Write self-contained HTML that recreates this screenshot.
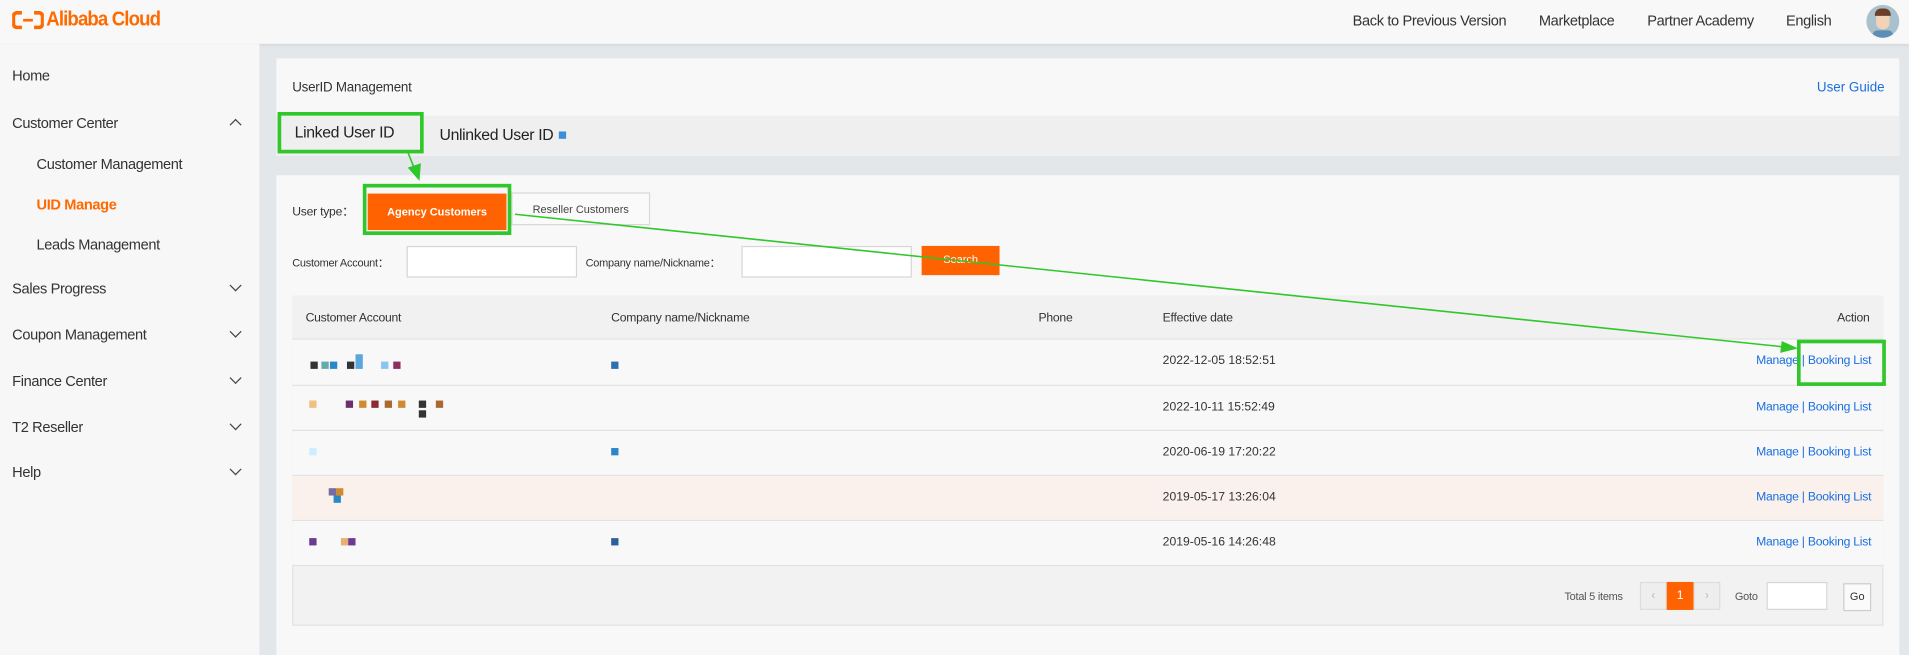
<!DOCTYPE html>
<html><head><meta charset="utf-8"><style>
*{margin:0;padding:0;box-sizing:border-box}
body{width:1909px;height:655px;overflow:hidden;background:#e4e7ea;font-family:"Liberation Sans",Arial,sans-serif}
#w{position:absolute;left:0;top:0;width:1568px;height:538px;transform:scale(1.21747);transform-origin:0 0;background:#e4e7ea}
.a{position:absolute;white-space:nowrap}
.hdr{position:absolute;left:0;top:0;width:1568px;height:36px;background:#f8f8f8;box-shadow:0 1px 3px rgba(0,0,0,.08)}
.side{position:absolute;left:0;top:36px;width:213px;height:502px;background:#f7f7f7}
.side .a{font-size:12px;color:#333;letter-spacing:-.3px}
.chev{position:absolute;width:7px;height:7px;border-right:1.3px solid #444;border-bottom:1.3px solid #444}
.panel{position:absolute;left:227px;width:1333px;background:#f8f8f8}
.t{font-size:10px;color:#333;letter-spacing:-.2px}
.inp{position:absolute;background:#fff;border:1px solid #d6d6d6}
.row{position:absolute;left:240px;width:1307px;height:37px;border-bottom:1px solid #e2e2e2;background:#f8f8f8}
.row .d{position:absolute;left:715px;top:12px;font-size:10px;color:#333}
.row .m{position:absolute;right:10px;top:12px;font-size:10px;color:#1b6fe0;letter-spacing:-.2px}
.px{position:absolute;width:6px;height:6px}
.g{position:absolute;border:3px solid #2fc72a}
</style></head><body><div id="w">
<div class="hdr">
 <svg class="a" style="left:10px;top:9px" width="26" height="15" viewBox="0 0 26 15"><path d="M8 1.5H4a3 3 0 0 0-3 3v6a3 3 0 0 0 3 3h4M18 1.5h4a3 3 0 0 1 3 3v6a3 3 0 0 1-3 3h-4" fill="none" stroke="#ff6a00" stroke-width="3"/><rect x="9" y="6.5" width="8" height="2.2" fill="#ff6a00"/></svg>
 <div class="a" style="left:38px;top:6px;font-size:17px;color:#ff6a00;letter-spacing:-.8px;font-weight:bold;transform:scaleX(.9);transform-origin:0 0">Alibaba Cloud</div>
 <div class="a" style="left:1111px;top:10px;font-size:12px;color:#333;letter-spacing:-.3px">Back to Previous Version</div>
 <div class="a" style="left:1264px;top:10px;font-size:12px;color:#333;letter-spacing:-.3px">Marketplace</div>
 <div class="a" style="left:1353px;top:10px;font-size:12px;color:#333;letter-spacing:-.3px">Partner Academy</div>
 <div class="a" style="left:1467px;top:10px;font-size:12px;color:#333;letter-spacing:-.3px">English</div>
 <div class="a" style="left:1533px;top:4px;width:27px;height:27px;border-radius:50%;background:#a9c1cc;overflow:hidden"><div class="a" style="left:8px;top:6px;width:11px;height:14px;border-radius:5px;background:#f3d3b8"></div><div class="a" style="left:7px;top:3px;width:13px;height:6px;border-radius:5px 5px 0 0;background:#6b3f2a"></div><div class="a" style="left:5px;top:21px;width:17px;height:8px;border-radius:6px;background:#5b8fb3"></div></div>
</div>
<div class="side">
 <div class="a" style="left:10px;top:19px">Home</div>
 <div class="a" style="left:10px;top:58px">Customer Center</div>
 <div class="chev" style="left:190px;top:63px;transform:rotate(-135deg)"></div>
 <div class="a" style="left:30px;top:92px">Customer Management</div>
 <div class="a" style="left:30px;top:125px;color:#ff6a00;font-weight:bold">UID Manage</div>
 <div class="a" style="left:30px;top:158px">Leads Management</div>
 <div class="a" style="left:10px;top:194px">Sales Progress</div><div class="chev" style="left:190px;top:195px;transform:rotate(45deg)"></div>
 <div class="a" style="left:10px;top:232px">Coupon Management</div><div class="chev" style="left:190px;top:233px;transform:rotate(45deg)"></div>
 <div class="a" style="left:10px;top:270px">Finance Center</div><div class="chev" style="left:190px;top:271px;transform:rotate(45deg)"></div>
 <div class="a" style="left:10px;top:308px">T2 Reseller</div><div class="chev" style="left:190px;top:309px;transform:rotate(45deg)"></div>
 <div class="a" style="left:10px;top:345px">Help</div><div class="chev" style="left:190px;top:346px;transform:rotate(45deg)"></div>
</div>
<div class="panel" style="top:48px;height:80px">
 <div class="a t" style="left:13px;top:18px;font-size:11px">UserID Management</div>
 <div class="a" style="right:12px;top:18px;font-size:11px;color:#1b6fe0">User Guide</div>
 <div class="a" style="left:0;top:47px;width:1333px;height:33px;background:#efefef"></div>
 <div class="a" style="left:15px;top:53px;font-size:13px;color:#222;letter-spacing:-.3px">Linked User ID</div>
 <div class="a" style="left:134px;top:55px;font-size:13px;color:#222;letter-spacing:-.3px">Unlinked User ID</div>
 <div class="px" style="left:232px;top:60px;background:#3a8fd6"></div>
</div>
<div class="g" style="left:228px;top:92px;width:120px;height:34px"></div>
<div class="panel" style="top:144px;height:394px">
 <div class="a t" style="left:13px;top:21px">User type：</div>
 <div class="a" style="left:75px;top:15px;width:114px;height:30px;background:#ff6200;color:#fff;font-size:9px;font-weight:bold;text-align:center;line-height:30px">Agency Customers</div>
 <div class="a" style="left:193px;top:14px;width:114px;height:27px;border:1px solid #d8d8d8;background:#fafafa;font-size:9px;color:#444;text-align:center;line-height:26px">Reseller Customers</div>
 <div class="a t" style="left:13px;top:65px;font-size:9px">Customer Account：</div>
 <div class="inp" style="left:107px;top:58px;width:140px;height:26px"></div>
 <div class="a t" style="left:254px;top:65px;font-size:9px">Company name/Nickname：</div>
 <div class="inp" style="left:382px;top:58px;width:140px;height:26px"></div>
 <div class="a" style="left:530px;top:58px;width:64px;height:24px;background:#ff6200;color:#fff;font-size:9px;text-align:center;line-height:22px">Search</div>
</div>
<div class="g" style="left:298px;top:151px;width:122px;height:42px"></div>
<div class="a" style="left:240px;top:243px;width:1307px;height:271px;border:1px solid #e2e2e2;background:#f2f2f2"></div>
<div class="a" style="left:240px;top:243px;width:1307px;height:36px;background:#f1f1f1;border-bottom:1px solid #e2e2e2"></div>
<div class="a t" style="left:251px;top:256px">Customer Account</div>
<div class="a t" style="left:502px;top:256px">Company name/Nickname</div>
<div class="a t" style="left:853px;top:256px">Phone</div>
<div class="a t" style="left:955px;top:256px">Effective date</div>
<div class="a t" style="left:1509px;top:256px">Action</div>
<div class="row" style="top:279px;height:38px"><div class="d">2022-12-05 18:52:51</div><div class="m">Manage | Booking List</div>
 <div class="px" style="left:15px;top:18px;background:#333"></div><div class="px" style="left:24px;top:18px;background:#6aa"></div><div class="px" style="left:31px;top:18px;background:#2b88c8"></div><div class="px" style="left:45px;top:18px;background:#333"></div><div class="px" style="left:52px;top:12px;height:12px;background:#5aa6de"></div><div class="px" style="left:73px;top:18px;background:#8ac4f0"></div><div class="px" style="left:83px;top:18px;background:#8a3060"></div><div class="px" style="left:262px;top:18px;background:#2e6fb0"></div></div>
<div class="row" style="top:317px;height:37px"><div class="d">2022-10-11 15:52:49</div><div class="m">Manage | Booking List</div>
 <div class="px" style="left:14px;top:12px;background:#f0c080"></div><div class="px" style="left:44px;top:12px;background:#6b3070"></div><div class="px" style="left:55px;top:12px;background:#d08a30"></div><div class="px" style="left:65px;top:12px;background:#8b2a30"></div><div class="px" style="left:76px;top:12px;background:#a86a30"></div><div class="px" style="left:87px;top:12px;background:#d08a30"></div><div class="px" style="left:104px;top:12px;background:#333"></div><div class="px" style="left:118px;top:12px;background:#a86a30"></div><div class="px" style="left:104px;top:20px;background:#333"></div></div>
<div class="row" style="top:354px;height:37px"><div class="d">2020-06-19 17:20:22</div><div class="m">Manage | Booking List</div>
 <div class="px" style="left:14px;top:14px;background:#cef"></div><div class="px" style="left:262px;top:14px;background:#2b88c8"></div></div>
<div class="row" style="top:391px;height:37px;background:#fbf1ec"><div class="d">2019-05-17 13:26:04</div><div class="m">Manage | Booking List</div>
 <div class="px" style="left:30px;top:10px;background:#7a6aa0"></div><div class="px" style="left:36px;top:10px;background:#d08a30"></div><div class="px" style="left:34px;top:16px;background:#2b88c8"></div></div>
<div class="row" style="top:428px;height:37px"><div class="d">2019-05-16 14:26:48</div><div class="m">Manage | Booking List</div>
 <div class="px" style="left:14px;top:14px;background:#6b3b90"></div><div class="px" style="left:40px;top:14px;background:#e8b070"></div><div class="px" style="left:46px;top:14px;background:#6b3b90"></div><div class="px" style="left:262px;top:14px;background:#2e5f9c"></div></div>
<div class="a t" style="left:1285px;top:485px;font-size:9px;color:#555">Total 5 items</div>
<div class="a" style="left:1347px;top:478px;width:22px;height:23px;border:1px solid #ddd;background:#eee;color:#bbb;font-size:10px;text-align:center;line-height:21px">‹</div>
<div class="a" style="left:1369px;top:478px;width:22px;height:23px;background:#ff6200;color:#fff;font-size:10px;text-align:center;line-height:23px">1</div>
<div class="a" style="left:1391px;top:478px;width:22px;height:23px;border:1px solid #ddd;background:#eee;color:#bbb;font-size:10px;text-align:center;line-height:21px">›</div>
<div class="a t" style="left:1425px;top:485px;font-size:9px;color:#555">Goto</div>
<div class="inp" style="left:1451px;top:478px;width:50px;height:23px"></div>
<div class="a" style="left:1514px;top:479px;width:23px;height:23px;border:1px solid #ccc;background:#fafafa;font-size:9px;text-align:center;line-height:21px;color:#333">Go</div>
<div class="g" style="left:1476px;top:279px;width:73px;height:38px"></div>
<svg class="a" style="left:0;top:0" width="1568" height="538"><g stroke="#2fc72a" stroke-width="1.3" fill="#2fc72a"><line x1="335" y1="125" x2="341" y2="140"/><path d="M336 138l8 9 1-12z"/><line x1="423" y1="176" x2="1466" y2="285"/><path d="M1475 286l-11-5-1 8z"/></g></svg>
</div></body></html>
